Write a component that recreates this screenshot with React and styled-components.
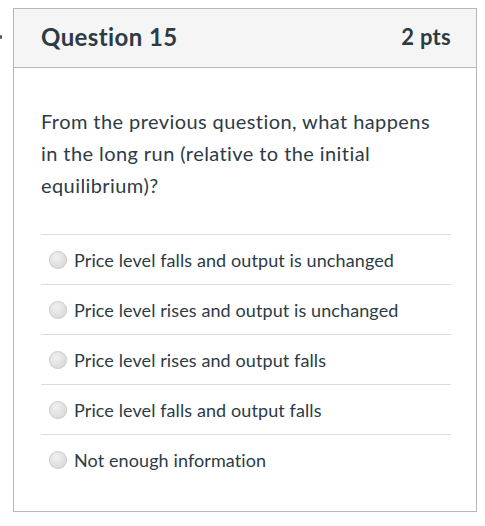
import React from 'react';
import styled, { createGlobalStyle } from 'styled-components';

const GlobalStyle = createGlobalStyle`
  html, body {
    margin: 0;
    padding: 0;
    background: #fff;
  }
  body {
    font-family: Lato, "Open Sans", sans-serif;
    color: #2d3b45;
  }
`;

const answers = [
  'Price level falls and output is unchanged',
  'Price level rises and output is unchanged',
  'Price level rises and output falls',
  'Price level falls and output falls',
  'Not enough information',
];

const App = () => {
  return (
    <>
      <GlobalStyle />
      <Page>
        <Speck />
        <Card>
          <Header>
            <Title>Question 15</Title>
            <Points>2 pts</Points>
          </Header>
          <Body>
            <Prompt>
              From the previous question, what happens in the long run (relative to the initial
              equilibrium)?
            </Prompt>
            <AnswerList>
              {answers.map((text) => (
                <Answer key={text}>
                  <Radio />
                  <AnswerText>{text}</AnswerText>
                </Answer>
              ))}
            </AnswerList>
          </Body>
        </Card>
      </Page>
    </>
  );
};

const Page = styled.div`
  position: relative;
  padding: 8px 8px 14px 13px;
`;

// little leftover mark from the previous page element
const Speck = styled.span`
  position: absolute;
  left: 0;
  top: 35px;
  width: 2px;
  height: 4px;
  border-radius: 1px;
  background: #555;
`;

const Card = styled.div`
  width: 464px;
  border: 1px solid #b7b7b7;
  box-sizing: border-box;
  background: #fff;
`;

const Header = styled.div`
  height: 59px;
  box-sizing: border-box;
  display: flex;
  align-items: center;
  justify-content: space-between;
  padding: 0 25px 3px 27px;
  background: #f5f5f5;
  border-bottom: 1px solid #b7b7b7;
`;

const Title = styled.h2`
  margin: 0;
  font-size: 24px;
  font-weight: 700;
  letter-spacing: 0.4px;
  color: #2d3b45;
`;

const Points = styled.span`
  font-size: 22px;
  font-weight: 700;
  letter-spacing: 0.3px;
  color: #2d3b45;
`;

const Body = styled.div`
  padding: 37px 25px 27px 27px;
`;

const Prompt = styled.p`
  max-width: 400px;
  margin: 0 0 33px;
  font-size: 20px;
  line-height: 32px;
  letter-spacing: 0.42px;
  color: #2d3b45;
`;

const AnswerList = styled.div`
  display: flex;
  flex-direction: column;
`;

const Answer = styled.label`
  display: flex;
  align-items: center;
  gap: 7px;
  height: 49px;
  padding-left: 8px;
  border-top: 1px solid #dcdcdc;
`;

const Radio = styled.span`
  width: 18px;
  height: 18px;
  border-radius: 50%;
  flex: 0 0 18px;
  background: radial-gradient(circle at 40% 35%, #f0f0f0 0%, #dedede 60%, #c9c9c9 100%);
  box-shadow: inset 0 0 0 1px #d0d0d0;
`;

const AnswerText = styled.span`
  font-size: 18px;
  letter-spacing: 0.1px;
  color: #2d3b45;
`;

export default App;
